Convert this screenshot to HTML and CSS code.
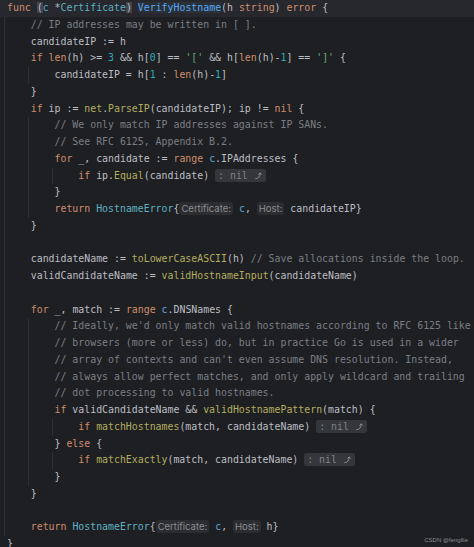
FILE: index.html
```html
<!DOCTYPE html>
<html>
<head>
<meta charset="utf-8">
<link rel="stylesheet" href="styles.css">
</head>
<body>
<div class="editor">
<div class="line current"><span class="k">func</span> <span class="brace">(</span><span class="p">c</span> *<span class="t">Certificate</span><span class="brace">)</span> <span class="fd">VerifyHostname</span>(h <span class="k">string</span>) <span class="k">error</span> {</div>
<div class="line"><span class="ind"></span><span class="c">// IP addresses may be written in [ ].</span></div>
<div class="line"><span class="ind"></span>candidateIP := h</div>
<div class="line"><span class="ind"></span><span class="k">if</span> <span class="b">len</span>(h) &gt;= <span class="n">3</span> &amp;&amp; h[<span class="n">0</span>] == <span class="s">'['</span> &amp;&amp; h[<span class="b">len</span>(h)-<span class="n">1</span>] == <span class="s">']'</span> {</div>
<div class="line"><span class="ind"></span><span class="ind"></span>candidateIP = h[<span class="n">1</span> : <span class="b">len</span>(h)-<span class="n">1</span>]</div>
<div class="line"><span class="ind"></span>}</div>
<div class="line"><span class="ind"></span><span class="k">if</span> ip := <span class="pk">net</span>.<span class="f">ParseIP</span>(candidateIP); ip != <span class="k">nil</span> {</div>
<div class="line"><span class="ind"></span><span class="ind"></span><span class="c">// We only match IP addresses against IP SANs.</span></div>
<div class="line"><span class="ind"></span><span class="ind"></span><span class="c">// See RFC 6125, Appendix B.2.</span></div>
<div class="line"><span class="ind"></span><span class="ind"></span><span class="k">for</span> _, candidate := <span class="k">range</span> <span class="p">c</span>.IPAddresses {</div>
<div class="line"><span class="ind"></span><span class="ind"></span><span class="ind"></span><span class="k">if</span> ip.<span class="f">Equal</span>(candidate) <span class="fold">: nil <svg class="ret" viewBox="0 0 10 10"><path d="M1.5 8.5 C5 8.5 6.8 6.2 6.8 2.2 M5 4 L6.8 2 L8.6 4" /></svg></span></div>
<div class="line"><span class="ind"></span><span class="ind"></span>}</div>
<div class="line"><span class="ind"></span><span class="ind"></span><span class="k">return</span> <span class="t">HostnameError</span>{<span class="hint">Certificate:</span> <span class="p">c</span>, <span class="hint">Host:</span> candidateIP}</div>
<div class="line"><span class="ind"></span>}</div>
<div class="line"><span class="ind"></span></div>
<div class="line"><span class="ind"></span>candidateName := <span class="f">toLowerCaseASCII</span>(h) <span class="c">// Save allocations inside the loop.</span></div>
<div class="line"><span class="ind"></span>validCandidateName := <span class="f">validHostnameInput</span>(candidateName)</div>
<div class="line"><span class="ind"></span></div>
<div class="line"><span class="ind"></span><span class="k">for</span> _, match := <span class="k">range</span> <span class="p">c</span>.DNSNames {</div>
<div class="line"><span class="ind"></span><span class="ind"></span><span class="c">// Ideally, we'd only match valid hostnames according to RFC 6125 like</span></div>
<div class="line"><span class="ind"></span><span class="ind"></span><span class="c">// browsers (more or less) do, but in practice Go is used in a wider</span></div>
<div class="line"><span class="ind"></span><span class="ind"></span><span class="c">// array of contexts and can't even assume DNS resolution. Instead,</span></div>
<div class="line"><span class="ind"></span><span class="ind"></span><span class="c">// always allow perfect matches, and only apply wildcard and trailing</span></div>
<div class="line"><span class="ind"></span><span class="ind"></span><span class="c">// dot processing to valid hostnames.</span></div>
<div class="line"><span class="ind"></span><span class="ind"></span><span class="k">if</span> validCandidateName &amp;&amp; <span class="f">validHostnamePattern</span>(match) {</div>
<div class="line"><span class="ind"></span><span class="ind"></span><span class="ind"></span><span class="k">if</span> <span class="f">matchHostnames</span>(match, candidateName) <span class="fold">: nil <svg class="ret" viewBox="0 0 10 10"><path d="M1.5 8.5 C5 8.5 6.8 6.2 6.8 2.2 M5 4 L6.8 2 L8.6 4" /></svg></span></div>
<div class="line"><span class="ind"></span><span class="ind"></span>} <span class="k">else</span> {</div>
<div class="line"><span class="ind"></span><span class="ind"></span><span class="ind"></span><span class="k">if</span> <span class="f">matchExactly</span>(match, candidateName) <span class="fold">: nil <svg class="ret" viewBox="0 0 10 10"><path d="M1.5 8.5 C5 8.5 6.8 6.2 6.8 2.2 M5 4 L6.8 2 L8.6 4" /></svg></span></div>
<div class="line"><span class="ind"></span><span class="ind"></span>}</div>
<div class="line"><span class="ind"></span>}</div>
<div class="line"><span class="ind"></span></div>
<div class="line"><span class="ind"></span><span class="k">return</span> <span class="t">HostnameError</span>{<span class="hint">Certificate:</span> <span class="p">c</span>, <span class="hint">Host:</span> h}</div>
<div class="line">}</div>
<div class="watermark">CSDN @fengllie</div>
</div>
</body>
</html>
```
FILE: styles.css
```css
html, body {
  margin: 0;
  padding: 0;
  background: #1e1f22;
  overflow: hidden;
}
.editor {
  width: 474px;
  height: 547px;
  background: #1e1f22;
  color: #bcbec4;
  font-family: "DejaVu Sans Mono", monospace;
  font-size: 9.88px;
  position: relative;
}
.line {
  height: 16.75px;
  line-height: 16.75px;
  white-space: pre;
  padding-left: 7px;
}
.line.current {
  background: #26282e;
}
.ind {
  display: inline-block;
  width: 4ch;
  height: 16.75px;
  vertical-align: top;
  position: relative;
}
.ind::before {
  content: "";
  position: absolute;
  left: -3px;
  top: 0;
  bottom: 0;
  width: 1px;
  background: #2e3034;
}
.k { color: #cf8e6d; }
.b { color: #cf8e6d; }
.c { color: #7a7e85; }
.s { color: #6aab73; }
.n { color: #2aacb8; }
.t { color: #5fb1c2; }
.fd { color: #56a8f5; background: #2b3038; }
.f { color: #b3ae60; }
.p { color: #5ea5d8; }
.pk { color: #b3ae60; }
.brace { background: #43454a; }
.hint {
  font-family: "Inter", "Noto Sans", sans-serif;
  font-size: 9.5px;
  color: #8a8c92;
  background: #2b2d30;
  border-radius: 3px;
  padding: 1px 2px;
}
.fold {
  color: #7e8187;
  background: #34363a;
  border-radius: 2px;
  padding: 1px 3px;
}
.ret {
  width: 9px;
  height: 9px;
  vertical-align: -1px;
  fill: none;
  stroke: #8a8c92;
  stroke-width: 1.1;
}
.watermark {
  position: absolute;
  right: 6px;
  bottom: 4px;
  font-family: "Liberation Sans", sans-serif;
  font-size: 6px;
  color: #8b8d92;
}
```
